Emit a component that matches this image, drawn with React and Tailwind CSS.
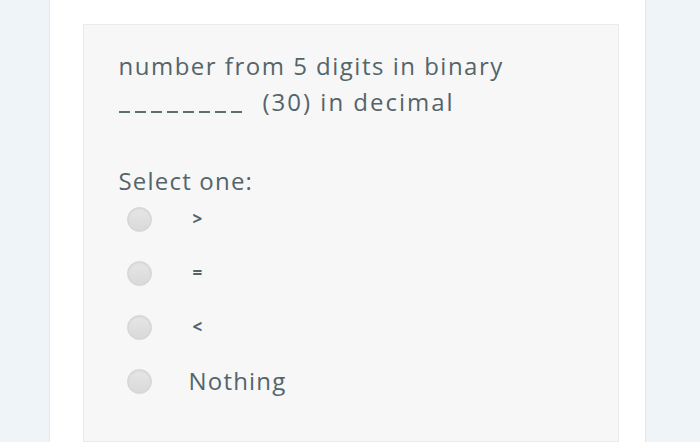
const options = ['>', '=', '<', 'Nothing']

const Radio = () => (
  <span className="block w-[25px] h-[25px] rounded-full border border-[#d4d4d4] bg-gradient-to-b from-[#e6e6e6] to-[#d9d9d9] shadow-[inset_0_1px_2px_rgba(0,0,0,0.08)]" />
)

export default function App() {
  return (
    <div className="w-[700px] h-[442px] overflow-hidden bg-[#eef4f7] flex justify-center" style={{ fontFamily: '"Open Sans", "Noto Sans", sans-serif' }}>
      <div className="w-[597px] ml-[-6px] h-full bg-white border-x border-[#dfe8ec] pt-[24px] pl-[33px] pr-[26px]">
        <div className="h-full bg-[#f7f7f7] border border-[#ebebeb] pl-[35px] pt-[23px] text-[#53656a]">
          <p className="text-[24px] leading-[36px] tracking-[1.5px]">number from 5 digits in binary</p>
          <div className="h-[36px] flex items-center">
            <span className="flex gap-[5px] mt-[19px] mr-[21px]">
              {[0, 1, 2, 3, 4, 5, 6, 7].map((i) => (
                <span key={i} className="block w-[11px] h-[2px] bg-[#5f6f71]" />
              ))}
            </span>
            <span className="text-[24px] tracking-[2px]">(30) in decimal</span>
          </div>
          <p className="text-[24px] leading-[30px] tracking-[1.2px] mt-[46px]">Select one:</p>
          <div className="mt-[-4px] flex flex-col">
            {options.map((o) => (
              <label key={o} className="flex items-center h-[54px] pl-[8px]">
                <Radio />
                <span className={o === 'Nothing' ? 'ml-[37px] text-[24px] tracking-[1.2px]' : 'ml-[41px] text-[17px] font-bold'}>{o}</span>
              </label>
            ))}
          </div>
        </div>
      </div>
    </div>
  )
}
